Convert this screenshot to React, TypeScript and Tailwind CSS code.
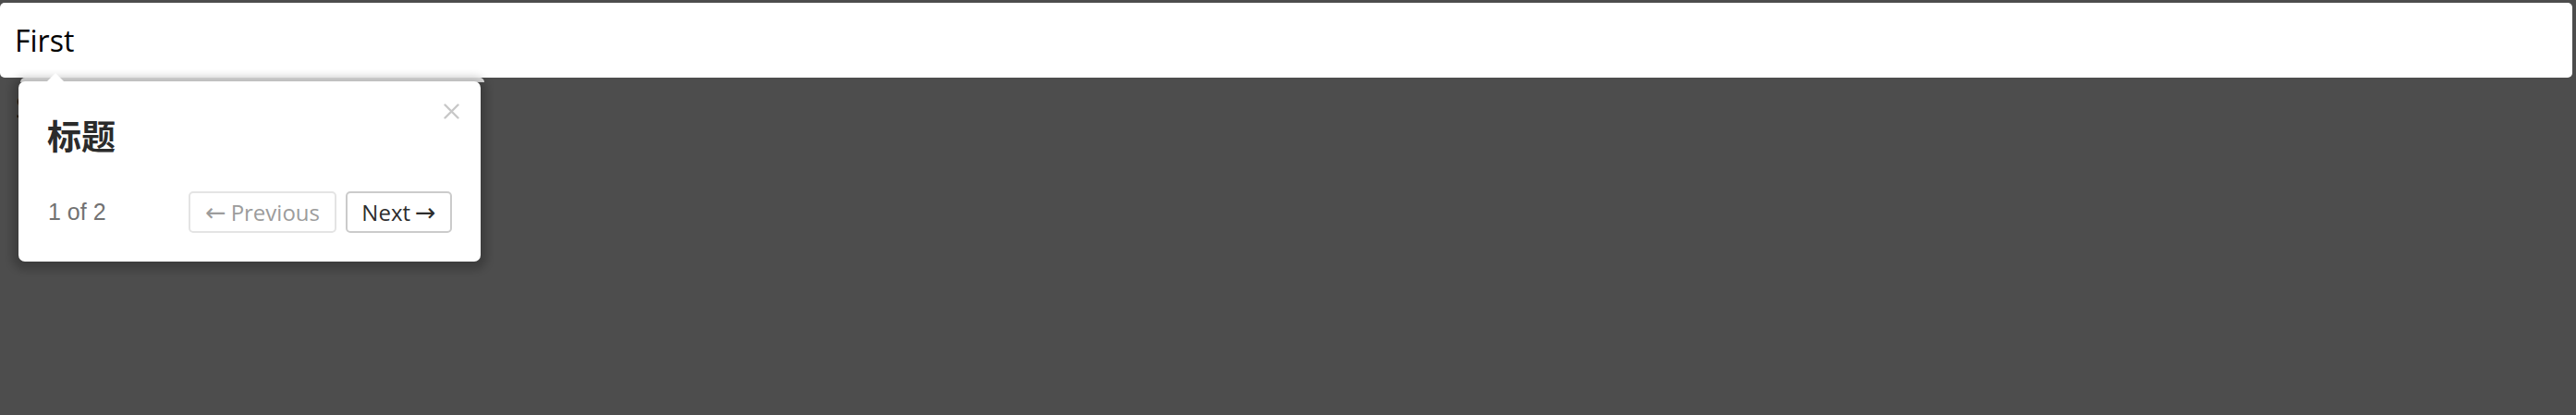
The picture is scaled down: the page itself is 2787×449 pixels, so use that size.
export default function App() {
  return (
    <div className="relative h-[449px] w-full overflow-hidden bg-[#4d4d4d] font-['Open_Sans','Noto_Sans',sans-serif]">
      {/* highlighted element */}
      <div className="mt-[3px] flex h-[81px] w-[2783px] items-center rounded-[5px] bg-white pl-[16px] text-[32px] text-black">
        First
      </div>
      {/* next step, dimmed by the overlay (behind the popover) */}
      <div className="pl-[17px] pt-[10px] text-[32px] leading-[44px] text-[#0e0e0e]">S</div>

      {/* light band under the cutout */}
      <div className="absolute left-[22px] top-[84px] h-[5px] w-[502px] rounded-t-[6px] bg-[#e6e6e6]" />

      {/* popover */}
      <div className="absolute left-[20px] top-[88px] h-[195px] w-[500px] rounded-[7px] bg-white px-[31px] pt-[37px] shadow-[0_2px_8px_7px_rgba(0,0,0,0.2)]">
        <div className="absolute left-[30px] top-[-9px] h-0 w-0 border-x-[10px] border-b-[10px] border-x-transparent border-b-white" />
        <button className="absolute right-[23px] top-[24px] flex h-[17px] w-[17px] items-center justify-center">
          <svg viewBox="0 0 17 17" className="h-[17px] w-[17px]">
            <path d="M1.5 1.5 L15.5 15.5 M15.5 1.5 L1.5 15.5" stroke="#c8c8c8" strokeWidth="2.4" strokeLinecap="round" />
          </svg>
        </button>
        <div className="font-['Noto_Sans_CJK_SC',sans-serif] text-[37px] font-bold leading-[43px] text-[#2b2b2b]">标题</div>
        <div className="mt-[39px] flex items-center justify-between">
          <span className="pl-[1px] font-['Liberation_Sans',sans-serif] text-[25px] text-[#727272]">1 of 2</span>
          <div className="flex gap-[10px]">
            <button className="flex h-[45px] w-[160px] items-center justify-center gap-[5px] rounded-[5px] border-2 border-[#e4e4e4] text-[24px] text-[#9c9c9c]">
              <span className="font-['DejaVu_Sans',sans-serif] text-[27px] leading-none">←</span>
              <span>Previous</span>
            </button>
            <button className="flex h-[45px] w-[115px] items-center justify-center gap-[5px] rounded-[5px] border-2 border-[#cbcbcb] text-[24px] text-[#2d2d2d]">
              <span>Next</span>
              <span className="font-['DejaVu_Sans',sans-serif] text-[27px] leading-none">→</span>
            </button>
          </div>
        </div>
      </div>
    </div>
  );
}
